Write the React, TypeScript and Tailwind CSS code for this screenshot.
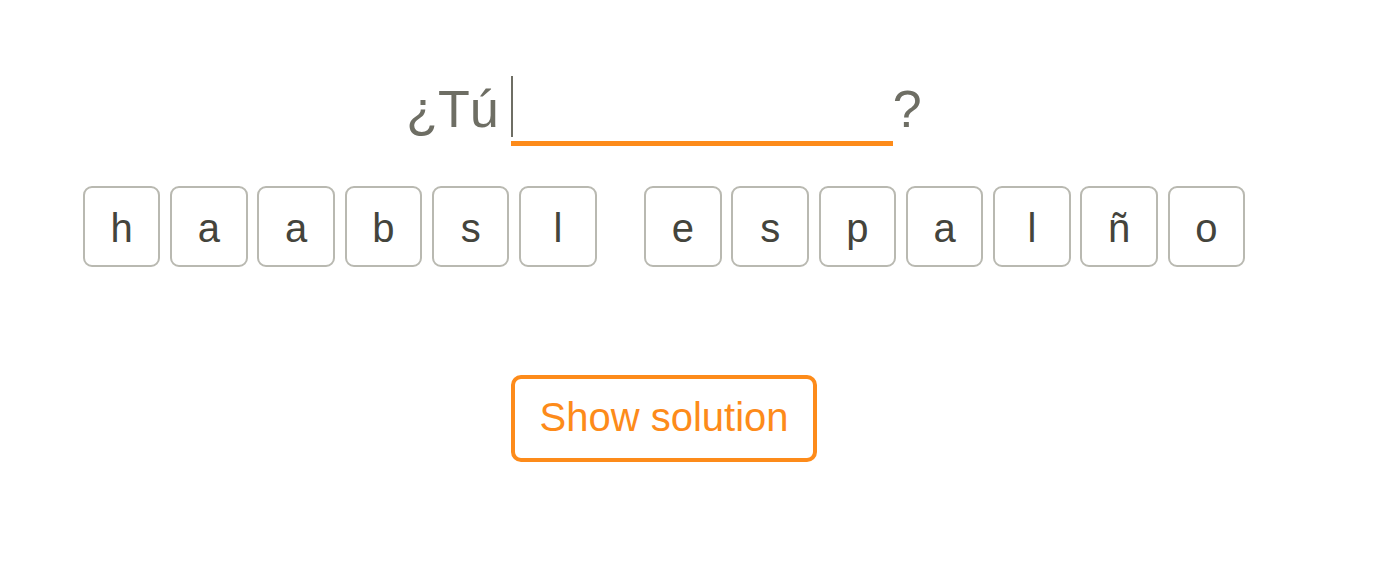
import React from "react";

const word1 = ["h", "a", "a", "b", "s", "l"];
const word2 = ["e", "s", "p", "a", "l", "ñ", "o"];

function Tile({ ch }: { ch: string }) {
  return (
    <div className="flex h-[81px] w-[77.5px] shrink-0 items-center justify-center rounded-[9px] border-2 border-[#b9b9b1] bg-white pt-[2px] text-[40px] leading-none text-[#44443c]">
      {ch}
    </div>
  );
}

export default function App() {
  return (
    <div
      className="h-[566px] w-full bg-white"
      style={{ fontFamily: '"Liberation Sans", Arial, Helvetica, sans-serif' }}
    >
      <div className="flex w-[1328px] flex-col items-center">
        {/* Question */}
        <div className="mt-[76px] flex items-start text-[52px] leading-none text-[#6e6e64]">
          <span className="mt-[7px]">¿Tú</span>
          <div className="ml-[12px] h-[70px] w-[382px] border-b-[5px] border-[#fd8b1a]">
            <div className="h-[61px] w-[2px] bg-[#6e6e64]" />
          </div>
          <span className="mt-[7px]">?</span>
        </div>

        {/* Tiles */}
        <div className="mt-[40px] flex gap-[47.5px]">
          <div className="flex gap-[9.75px]">
            {word1.map((c, i) => (
              <Tile key={i} ch={c} />
            ))}
          </div>
          <div className="flex gap-[9.75px]">
            {word2.map((c, i) => (
              <Tile key={i} ch={c} />
            ))}
          </div>
        </div>

        {/* Button */}
        <button className="mt-[108px] flex h-[87px] w-[306px] items-center justify-center rounded-[10px] border-4 border-[#fd8b1a] bg-white pb-[4px] text-[40px] leading-none text-[#fd8b1a]">
          Show solution
        </button>
      </div>
    </div>
  );
}
